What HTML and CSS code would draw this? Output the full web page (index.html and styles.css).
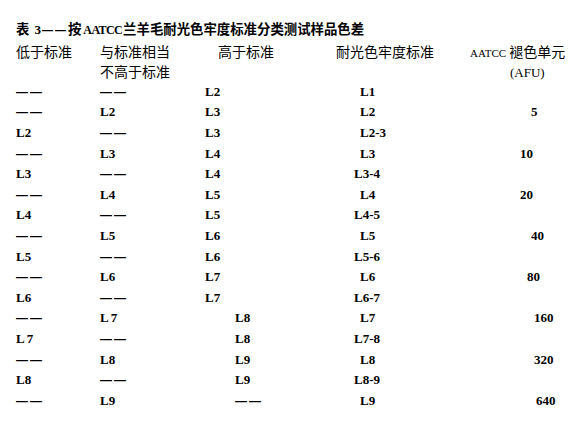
FILE: index.html
```html
<!DOCTYPE html>
<html lang="zh">
<head>
<meta charset="utf-8">
<title>AATCC 兰羊毛耐光色牢度标准分类</title>
<link rel="stylesheet" href="styles.css">
</head>
<body>
<div class="page">
  <div class="title">表 <span class="num">3</span><span class="dash">——</span>按<span class="en">AATCC</span>兰羊毛耐光色牢度标准分类测试样品色差</div>
  <div class="head">
    <span>低于标准</span><span>与标准相当</span><span>高于标准</span><span>耐光色牢度标准</span><span><span class="en">AATCC</span> 褪色单元</span>
  </div>
  <div class="head">
    <span></span><span>不高于标准</span><span></span><span></span><span class="afu"><span class="en">(AFU)</span></span>
  </div>
  <div class="rows">
    <div class="row"><span class="d">——</span><span class="d">——</span><span>L2</span><span class="p">L1</span><span></span></div>
    <div class="row"><span class="d">——</span><span>L2</span><span>L3</span><span class="p">L2</span><span class="n11">5</span></div>
    <div class="row"><span>L2</span><span class="d">——</span><span>L3</span><span class="p">L2-3</span><span></span></div>
    <div class="row"><span class="d">——</span><span>L3</span><span>L4</span><span class="p">L3</span><span>10</span></div>
    <div class="row"><span>L3</span><span class="d">——</span><span>L4</span><span>L3-4</span><span></span></div>
    <div class="row"><span class="d">——</span><span>L4</span><span>L5</span><span class="p">L4</span><span>20</span></div>
    <div class="row"><span>L4</span><span class="d">——</span><span>L5</span><span>L4-5</span><span></span></div>
    <div class="row"><span class="d">——</span><span>L5</span><span>L6</span><span class="p">L5</span><span class="n11">40</span></div>
    <div class="row"><span>L5</span><span class="d">——</span><span>L6</span><span>L5-6</span><span></span></div>
    <div class="row"><span class="d">——</span><span>L6</span><span>L7</span><span class="p">L6</span><span class="n7">80</span></div>
    <div class="row"><span>L6</span><span class="d">——</span><span>L7</span><span>L6-7</span><span></span></div>
    <div class="row"><span class="d">——</span><span class="w">L7</span><span class="s">L8</span><span class="p">L7</span><span class="n14">160</span></div>
    <div class="row"><span class="w">L7</span><span class="d">——</span><span class="s">L8</span><span>L7-8</span><span></span></div>
    <div class="row"><span class="d">——</span><span>L8</span><span class="s">L9</span><span class="p">L8</span><span class="n14">320</span></div>
    <div class="row"><span>L8</span><span class="d">——</span><span class="s">L9</span><span>L8-9</span><span></span></div>
    <div class="row"><span class="d">——</span><span>L9</span><span class="s d">——</span><span class="p">L9</span><span class="n16">640</span></div>
  </div>
</div>
</body>
</html>
```

FILE: styles.css
```css
html, body {
  margin: 0;
  padding: 0;
  background: #ffffff;
}

.page {
  padding: 19px 0 0 16px;
  color: #000;
  font-family: "Noto Sans CJK SC", "Noto Sans", sans-serif;
  font-size: 14px;
  line-height: 20.6px;
}

.title {
  font-weight: bold;
  font-size: 13.4px;
  white-space: nowrap;
  height: 20.6px;
  margin-top: -1px;
  margin-bottom: 2px;
}

.title .num {
  font-family: "Liberation Serif", serif;
  font-size: 13px;
  margin-left: 2px;
}

.title .dash {
  font-family: "Liberation Sans", sans-serif;
  font-weight: bold;
  font-size: 11px;
  letter-spacing: 2px;
  margin-left: 1px;
}

.title .en {
  font-family: "Liberation Serif", serif;
  font-size: 12px;
  letter-spacing: -0.6px;
  margin: 0 1px 0 2px;
}

.en {
  font-family: "Liberation Serif", serif;
  font-size: 11px;
}

.head {
  display: grid;
  grid-template-columns: 84px 118px 118px 134px 1fr;
  white-space: nowrap;
  height: 20.6px;
}

.head .afu {
  padding-left: 40px;
}

.head .afu .en {
  font-size: 13px;
}

.row {
  display: grid;
  grid-template-columns: 84px 105px 149px 166px 1fr;
  height: 20.6px;
  white-space: nowrap;
  font-family: "Liberation Serif", serif;
  font-weight: bold;
  font-size: 13px;
}

.row .d {
  font-family: "Liberation Sans", sans-serif;
  font-weight: bold;
  font-size: 12px;
  letter-spacing: 2px;
}

.row .w {
  letter-spacing: 2px;
}

.row .s {
  padding-left: 30px;
}

.row .p {
  padding-left: 6px;
}

.row .n7 { padding-left: 7px; }
.row .n11 { padding-left: 11px; }
.row .n14 { padding-left: 14px; }
.row .n16 { padding-left: 16px; }
```
